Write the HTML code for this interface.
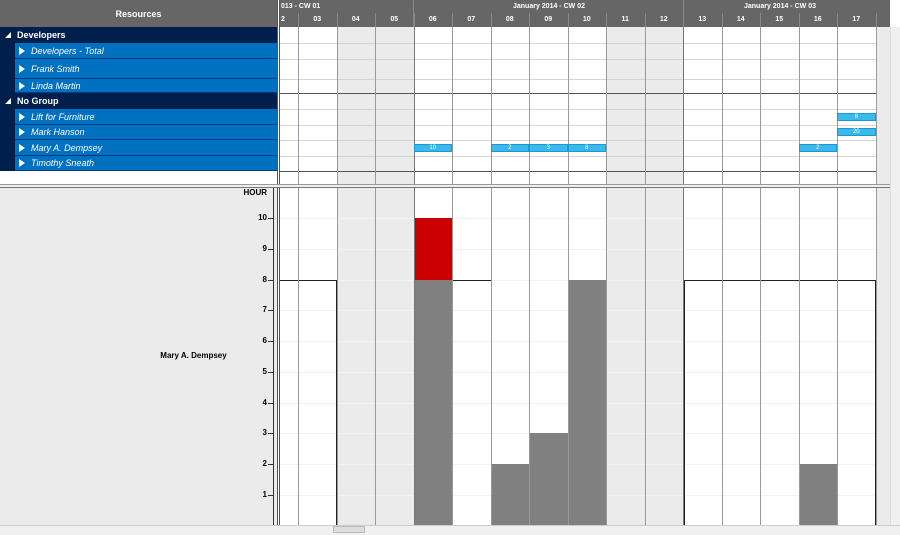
<!DOCTYPE html>
<html><head><style>
*{margin:0;padding:0;box-sizing:border-box}
body{width:900px;height:535px;overflow:hidden;background:#fff;font-family:"Liberation Sans",sans-serif;position:relative}
.a{position:absolute}
.hd{background:#666;color:#fff;font-weight:bold;font-size:8px}
.row{position:absolute;left:0;width:277px;color:#fff;font-size:9px}
.g{background:#001f4d;font-weight:bold}
.c{background:#0070c0;font-style:italic;left:15px;width:262px;border-bottom:1px solid #003a78}
.tri{position:absolute;left:5px;top:5px;width:0;height:0;border-left:6px solid transparent;border-bottom:6px solid #fff}
.play{position:absolute;left:4px;width:0;height:0;border-top:4px solid transparent;border-bottom:4px solid transparent;border-left:6px solid #fff}
.bar{position:absolute;height:8px;background:#3bb8ec;border:1px solid #1a9ad4;color:#fff;font-size:6px;text-align:center;line-height:6px}
</style></head><body>
<!-- left header -->
<div class="a hd" style="left:0;top:0;width:277px;height:27px;text-align:center;line-height:28px;font-size:9px">Resources</div>
<div class="row g" style="top:27px;height:16px;line-height:16px"><span class="tri"></span><span style="margin-left:17px">Developers</span></div>
<div class="a" style="left:0;top:43px;width:15px;height:50px;background:#001f4d"></div>
<div class="row c" style="top:43px;height:16px;line-height:16px"><span class="play" style="top:4px"></span><span style="margin-left:16px">Developers - Total</span></div>
<div class="row c" style="top:59px;height:20px;line-height:20px"><span class="play" style="top:6px"></span><span style="margin-left:16px">Frank Smith</span></div>
<div class="row c" style="top:79px;height:14px;line-height:14px"><span class="play" style="top:3px"></span><span style="margin-left:16px">Linda Martin</span></div>
<div class="row g" style="top:93px;height:16px;line-height:16px"><span class="tri"></span><span style="margin-left:17px">No Group</span></div>
<div class="a" style="left:0;top:109px;width:15px;height:62px;background:#001f4d"></div>
<div class="row c" style="top:109px;height:16px;line-height:16px"><span class="play" style="top:4px"></span><span style="margin-left:16px">Lift for Furniture</span></div>
<div class="row c" style="top:125px;height:15px;line-height:15px"><span class="play" style="top:3px"></span><span style="margin-left:16px">Mark Hanson</span></div>
<div class="row c" style="top:140px;height:16px;line-height:16px"><span class="play" style="top:4px"></span><span style="margin-left:16px">Mary A. Dempsey</span></div>
<div class="row c" style="top:156px;height:15px;line-height:15px"><span class="play" style="top:3px"></span><span style="margin-left:16px">Timothy Sneath</span></div>
<!-- separators -->
<div class="a" style="left:277px;top:0;width:3px;height:535px;background:#fff;border-left:1px solid #555;border-right:1px solid #555"></div>
<div class="a" style="left:0;top:184px;width:900px;height:4px;background:#eee;border-top:1px solid #999;border-bottom:1px solid #777"></div>
<!-- lower left -->
<div class="a" style="left:0;top:188px;width:277px;height:337px;background:#ebebeb"></div>
<div class="a" style="left:0;top:351px;width:387px;text-align:center;font-size:8px;font-weight:bold">Mary A. Dempsey</div>
<div class="a" style="left:230px;top:188px;width:37px;text-align:right;font-size:8px;font-weight:bold">HOUR</div>
<div id="chart"></div>
<!-- scrollbars -->
<div class="a" style="left:0;top:525px;width:900px;height:10px;background:#f0f0f0;border-top:1px solid #ccc"></div>
<div class="a" style="left:333px;top:526px;width:32px;height:7px;background:#ddd;border:1px solid #bbb"></div>
<div class="a" style="left:890px;top:27px;width:10px;height:498px;background:#f0f0f0;border-left:1px solid #ddd"></div>
<script>
var h='';
function d(s){h+=s;}
var X0=280,XE=890;
function cx(k){return 298+(k-3)*38.5;}
// header
d('<div class="a hd" style="left:280px;top:0;width:610px;height:27px"></div>');
d('<div class="a" style="left:281px;top:3px;font-size:7px;color:#fff;font-weight:bold">013 - CW 01</div>');
d('<div class="a" style="left:414px;top:3px;width:270px;text-align:center;font-size:7px;color:#fff;font-weight:bold">January 2014 - CW 02</div>');
d('<div class="a" style="left:684px;top:3px;width:270px;text-align:center;font-size:7px;color:#fff;font-weight:bold;width:192px">January 2014 - CW 03</div>');
d('<div class="a" style="left:413px;top:0;width:1px;height:27px;background:#888"></div>');
d('<div class="a" style="left:683px;top:0;width:1px;height:27px;background:#888"></div>');
// columns
for(var k=2;k<=18;k++){
 var l=cx(k),r=l+38.5;var L=Math.max(l,X0),R=Math.min(r,XE);
 var we=(k==4||k==5||k==11||k==12||k==18);
 var bg=we?'#ebebeb':'#fff';
 d('<div class="a" style="left:'+L+'px;top:27px;width:'+(R-L)+'px;height:157px;background:'+bg+'"></div>');
 d('<div class="a" style="left:'+L+'px;top:188px;width:'+(R-L)+'px;height:337px;background:'+bg+'"></div>');
 if(k<18){var lab=(k<10?'0':'')+k;
 d('<div class="a" style="left:'+(k==2?281:l)+'px;top:16px;width:'+(k==2?20:38.5)+'px;text-align:'+(k==2?'left':'center')+';font-size:7px;color:#fff;font-weight:bold">'+(k==2?'2':lab)+'</div>');}
}
// horizontal lines upper
[43,59,79,109,125,140,156,171].forEach(function(y){d('<div class="a" style="left:280px;top:'+y+'px;width:596px;height:1px;background:#d4d4d4"></div>');});
[93,171].forEach(function(y){d('<div class="a" style="left:280px;top:'+y+'px;width:596px;height:1px;background:#555"></div>');});
// lower grid
var U=30.78,Y0=525.8;
for(var v=1;v<=10;v++){var y=Math.round(Y0-v*U);
 d('<div class="a" style="left:280px;top:'+y+'px;width:596px;height:1px;background:#f2f2f2"></div>');
 d('<div class="a" style="left:268px;top:'+y+'px;width:5px;height:1px;background:#333"></div>');
 d('<div class="a" style="left:240px;top:'+(y-5)+'px;width:27px;text-align:right;font-size:8px;font-weight:bold">'+v+'</div>');}
d('<div class="a" style="left:273px;top:188px;width:1px;height:337px;background:#333"></div>');
// bars lower
function bar(k,v0,v1,c){var t=Y0-v1*U,b=Y0-v0*U;d('<div class="a" style="left:'+cx(k)+'px;top:'+t+'px;width:38.5px;height:'+(b-t)+'px;background:'+c+'"></div>');}
bar(6,0,8,'#808080');bar(6,8,10,'#cc0000');bar(8,0,2,'#808080');bar(9,0,3,'#808080');bar(10,0,8,'#808080');bar(16,0,2,'#808080');
// capacity outline
var y8=Y0-8*U;
d('<div class="a" style="left:280px;top:'+y8+'px;width:57px;height:'+(Y0-y8)+'px;border-top:1px solid #222;border-right:1px solid #222"></div>');
d('<div class="a" style="left:684px;top:'+y8+'px;width:192px;height:'+(Y0-y8)+'px;border:1px solid #222;border-bottom:0"></div>');
d('<div class="a" style="left:453px;top:'+y8+'px;width:38px;height:1px;background:#222"></div>');
// vertical lines
for(var k=3;k<=18;k++){var x=Math.round(cx(k));var col=(k==6||k==13)?'#777':'#999';
 d('<div class="a" style="left:'+x+'px;top:13px;width:1px;height:14px;background:#888"></div>');
 d('<div class="a" style="left:'+x+'px;top:27px;width:1px;height:157px;background:'+col+'"></div>');
 d('<div class="a" style="left:'+x+'px;top:188px;width:1px;height:337px;background:'+col+'"></div>');}
// task bars
function tb(k,n,y,t){d('<div class="bar" style="left:'+cx(k)+'px;top:'+y+'px;width:'+(38.5*n)+'px">'+t+'</div>');}
tb(6,1,144,'10');tb(8,1,144,'2');tb(9,1,144,'3');tb(10,1,144,'8');tb(16,1,144,'2');tb(17,1,113,'8');tb(17,1,128,'20');
document.getElementById('chart').innerHTML=h;
</script>
</body></html>
